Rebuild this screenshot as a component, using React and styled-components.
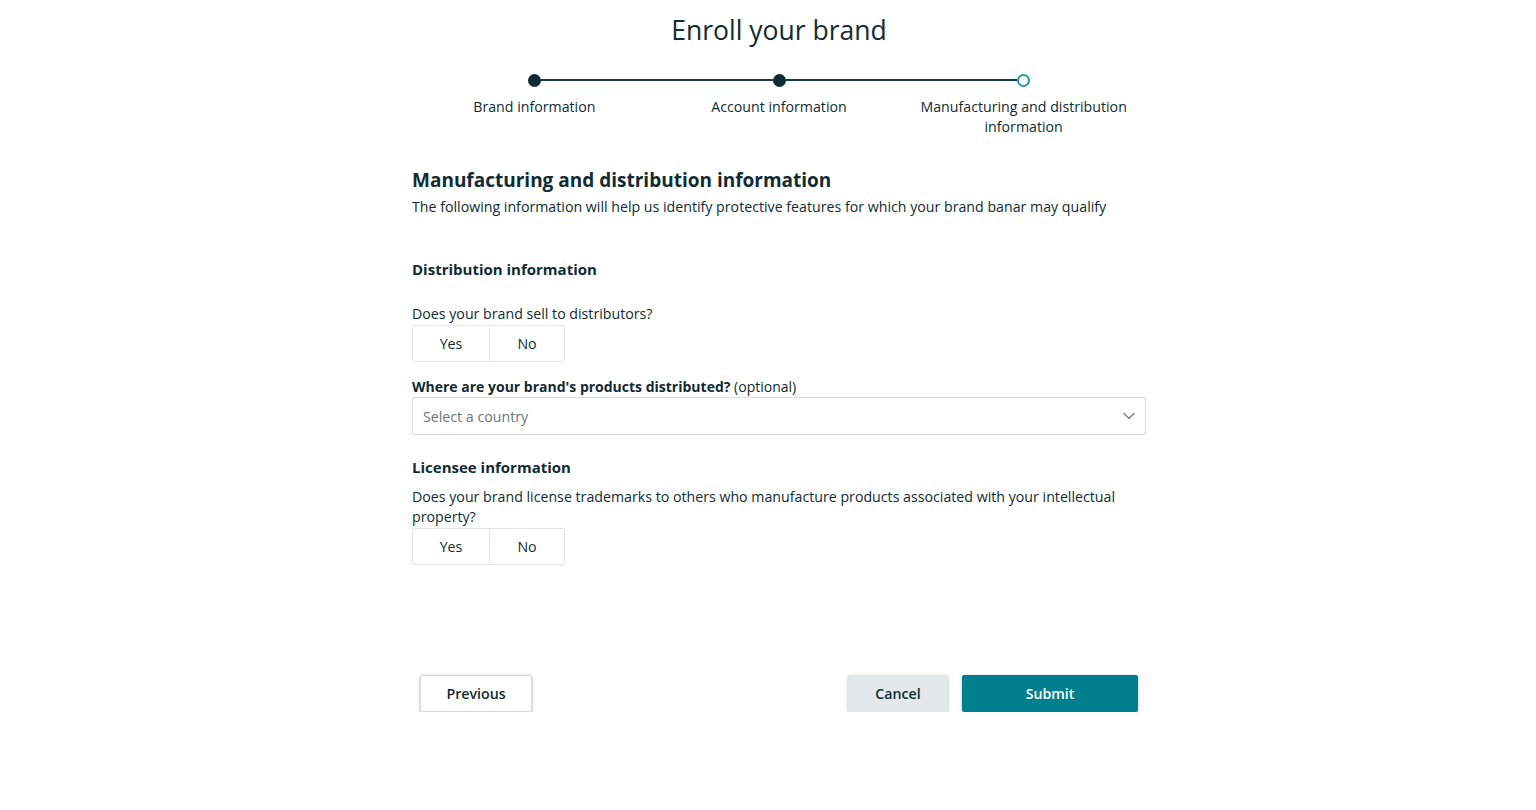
import React from 'react';
import styled, { createGlobalStyle } from 'styled-components';

const GlobalStyle = createGlobalStyle`
  body {
    margin: 0;
    background: #ffffff;
    font-family: "Open Sans", "Liberation Sans", sans-serif;
    color: #0f2b33;
  }
  * { box-sizing: border-box; }
`;

const Page = styled.div`
  width: 756px;
  margin: 0 auto;
  padding: 12px 0 0 22px;
`;

const Title = styled.h1`
  margin: 0;
  font-size: 26.5px;
  line-height: 36px;
  font-weight: 500;
  text-align: center;
  color: #0f2b33;
`;

const Stepper = styled.div`
  display: grid;
  grid-template-columns: repeat(3, 1fr);
  margin-top: 26px;
`;

const Step = styled.div`
  display: flex;
  flex-direction: column;
  align-items: center;
`;

const DotRow = styled.div`
  display: flex;
  align-items: center;
  width: 100%;
  height: 12px;
`;

const Seg = styled.div`
  flex: 1;
  height: 2px;
  background: ${p => (p.$on ? '#173a40' : 'transparent')};
`;

const Dot = styled.div`
  width: 13px;
  height: 13px;
  border-radius: 50%;
  flex-shrink: 0;
  background: ${p => (p.$current ? '#ffffff' : '#0f2b33')};
  border: 2px solid ${p => (p.$current ? '#1d9aa6' : '#0f2b33')};
`;

const StepLabel = styled.div`
  margin-top: 11px;
  font-size: 14.2px;
  line-height: 20px;
  text-align: center;
  max-width: 220px;
`;

const SectionTitle = styled.h2`
  margin: 30px 0 0;
  font-size: 19px;
  line-height: 26px;
  font-weight: 700;
`;

const Text = styled.p`
  margin: ${p => p.$mt || 0}px 0 0;
  font-size: 14.2px;
  line-height: 20px;
`;

const SubTitle = styled.h3`
  margin: ${p => p.$mt}px 0 0;
  font-size: 15px;
  line-height: 20px;
  font-weight: 700;
`;

const Label = styled.div`
  margin-top: 15px;
  font-size: 14px;
  line-height: 20px;
  font-weight: 700;

  span {
    font-weight: 400;
  }
`;

const Toggle = styled.div`
  display: inline-flex;
  align-self: flex-start;
  margin-top: 1px;
  border: 1px solid #e3e6e7;
  border-radius: 2px;
  height: 37px;
`;

const ToggleCell = styled.button`
  width: ${p => p.$w}px;
  border: none;
  border-right: ${p => (p.$last ? 'none' : '1px solid #e3e6e7')};
  background: #ffffff;
  font-family: inherit;
  font-size: 14.2px;
  font-weight: 500;
  color: #0f2b33;
  cursor: pointer;
`;

const Select = styled.div`
  display: flex;
  align-items: center;
  justify-content: space-between;
  height: 38px;
  padding: 0 10px;
  border: 1px solid #d9dedf;
  border-radius: 2px;
  font-size: 14.2px;
  color: #6b7778;
`;

const Footer = styled.div`
  display: flex;
  align-items: center;
  margin: 110px 8px 0;
  gap: 14px;
`;

const Button = styled.button`
  width: ${p => p.$w}px;
  height: 37px;
  border-radius: 2px;
  font-family: inherit;
  font-size: 14.2px;
  font-weight: 600;
  cursor: pointer;
  border: 1px solid ${p => (p.$variant === 'primary' ? '#00808f' : p.$variant === 'secondary' ? '#e3e9ea' : '#d5dbdb')};
  background: ${p => (p.$variant === 'primary' ? '#00808f' : p.$variant === 'secondary' ? '#e3e9ea' : '#ffffff')};
  color: ${p => (p.$variant === 'primary' ? '#ffffff' : '#0f2b33')};
  box-shadow: 0 1px 3px rgba(15, 43, 51, 0.35);
`;

const Spacer = styled.div`
  flex: 1;
`;

const steps = [
  { label: 'Brand information' },
  { label: 'Account information' },
  { label: 'Manufacturing and distribution information', current: true },
];

const YesNo = () => (
  <Toggle>
    <ToggleCell $w={77}>Yes</ToggleCell>
    <ToggleCell $w={74} $last>No</ToggleCell>
  </Toggle>
);

const Chevron = () => (
  <svg width="12" height="8" viewBox="0 0 12 8" fill="none">
    <path d="M1 1.5l5 5 5-5" stroke="#7b8687" strokeWidth="1.5" strokeLinecap="round" strokeLinejoin="round" />
  </svg>
);

export default function App() {
  return (
    <>
      <GlobalStyle />
      <Page>
        <Title>Enroll your brand</Title>
        <Stepper>
          {steps.map((s, i) => (
            <Step key={s.label}>
              <DotRow>
                <Seg $on={i > 0} />
                <Dot $current={s.current} />
                <Seg $on={i < steps.length - 1} />
              </DotRow>
              <StepLabel>{s.label}</StepLabel>
            </Step>
          ))}
        </Stepper>

        <SectionTitle>Manufacturing and distribution information</SectionTitle>
        <Text $mt={4}>
          The following information will help us identify protective features for which your brand banar may qualify
        </Text>

        <SubTitle $mt={42}>Distribution information</SubTitle>
        <Text $mt={25}>Does your brand sell to distributors?</Text>
        <YesNo />

        <Label>
          Where are your brand's products distributed? <span>(optional)</span>
        </Label>
        <Select>
          Select a country
          <Chevron />
        </Select>

        <SubTitle $mt={22}>Licensee information</SubTitle>
        <Text $mt={10}>
          Does your brand license trademarks to others who manufacture products associated with your intellectual property?
        </Text>
        <YesNo />

        <Footer>
          <Button $w={112}>Previous</Button>
          <Spacer />
          <Button $w={100} $variant="secondary">Cancel</Button>
          <Button $w={176} $variant="primary">Submit</Button>
        </Footer>
      </Page>
    </>
  );
}
